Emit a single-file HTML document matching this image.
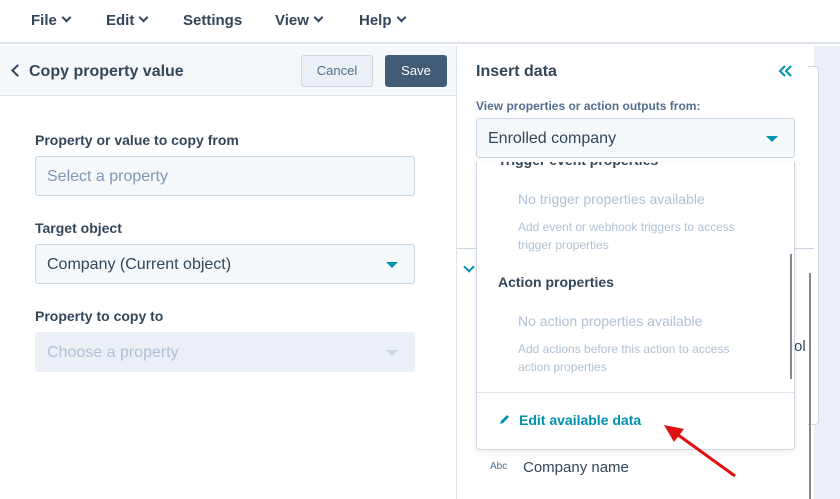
<!DOCTYPE html>
<html><head><style>
*{box-sizing:border-box;margin:0;padding:0}
body{width:840px;height:499px;overflow:hidden;background:#fff;font-family:"Liberation Sans",sans-serif;color:#33475b;position:relative}
.abs{position:absolute}
.menu{left:0;top:0;width:840px;height:44px;background:#fff;border-bottom:2px solid #dfe3eb}
.menu span{position:absolute;top:12px;font-size:15px;font-weight:bold;color:#33475b}
.chev{display:inline-block;width:7px;height:7px;border-right:2px solid #33475b;border-bottom:2px solid #33475b;transform:rotate(45deg);margin-left:6px;position:relative;top:-4px}
.hdr{left:0;top:46px;width:456px;height:50px;background:#f5f8fa;border-bottom:1px solid #dfe3eb}
.lbl{font-size:14px;font-weight:bold;color:#33475b;left:35px}
.inp{left:35px;width:380px;height:40px;border:1px solid #cbd6e2;border-radius:3px;background:#f5f8fa;font-size:16px;padding:11px 11px 0}
.tri{position:absolute;right:16px;top:17px;width:0;height:0;border-left:6px solid transparent;border-right:6px solid transparent;border-top:6px solid #0091ae}
</style></head><body>
<div class="abs menu">
<span style="left:31px">File<i class="chev"></i></span>
<span style="left:106px">Edit<i class="chev"></i></span>
<span style="left:183px">Settings</span>
<span style="left:275px">View<i class="chev"></i></span>
<span style="left:359px">Help<i class="chev"></i></span>
</div>
<div class="abs hdr">
<div class="abs" style="left:13px;top:20px;width:9px;height:9px;border-left:2px solid #33475b;border-bottom:2px solid #33475b;transform:rotate(45deg)"></div>
<div class="abs" style="left:29px;top:17px;font-size:16px;font-weight:bold">Copy property value</div>
<div class="abs" style="left:301px;top:9px;width:72px;height:32px;border:1px solid #cbd6e2;border-radius:3px;background:#eaf0f6;font-size:13px;color:#516f90;text-align:center;line-height:30px">Cancel</div>
<div class="abs" style="left:385px;top:9px;width:62px;height:32px;border-radius:3px;background:#425b76;color:#fff;font-size:13px;text-align:center;line-height:32px">Save</div>
</div>
<div class="abs lbl" style="top:132px">Property or value to copy from</div>
<div class="abs inp" style="top:156px;color:#7c98b6">Select a property</div>
<div class="abs lbl" style="top:220px">Target object</div>
<div class="abs inp" style="top:244px;color:#33475b">Company (Current object)<i class="tri"></i></div>
<div class="abs lbl" style="top:308px">Property to copy to</div>
<div class="abs inp" style="top:332px;background:#eaf0f6;border-color:#eaf0f6;color:#b0c1d4">Choose a property<i class="tri" style="border-top-color:#cbd6e2"></i></div>

<div class="abs" style="left:456px;top:46px;width:1px;height:453px;background:#dfe3eb"></div>
<div class="abs" style="left:814px;top:46px;width:26px;height:453px;background:#eaf0f6"></div>
<div class="abs" style="left:808px;top:66px;width:11px;height:359px;border:1px solid #cbd6e2;border-left:none;border-radius:0 4px 4px 0;background:#fff"></div>
<div class="abs" style="left:457px;top:248px;width:357px;height:1px;background:#cbd6e2"></div>
<div class="abs" style="left:809px;top:273px;width:2px;height:226px;background:#888"></div>
<div class="abs" style="left:465px;top:263px;width:8px;height:8px;border-right:2px solid #0091ae;border-bottom:2px solid #0091ae;transform:rotate(45deg)"></div>
<div class="abs" style="left:794px;top:338px;font-size:15px">ol</div>
<div class="abs" style="left:476px;top:63px;font-size:16px;font-weight:bold">Insert data</div>
<svg class="abs" style="left:778px;top:64px" width="16" height="14"><path d="M7 2 L2 7 L7 12 M13 2 L8 7 L13 12" fill="none" stroke="#0091ae" stroke-width="2"/></svg>
<div class="abs" style="left:476px;top:99px;font-size:12px;font-weight:bold;color:#516f90">View properties or action outputs from:</div>
<div class="abs inp" style="left:476px;top:118px;width:319px;color:#33475b">Enrolled company<i class="tri"></i></div>
<div class="abs" style="left:490px;top:461px;font-size:10px;color:#516f90">Abc</div>
<div class="abs" style="left:523px;top:459px;font-size:15px">Company name</div>

<div class="abs" style="left:476px;top:162px;width:319px;height:288px;background:#fff;border:1px solid #cbd6e2;border-top:none;border-radius:0 0 4px 4px;box-shadow:0 2px 8px rgba(0,0,0,.08);overflow:hidden">
<div class="abs" style="left:21px;top:-10px;font-size:14px;font-weight:bold">Trigger event properties</div>
<div class="abs" style="left:41px;top:29px;font-size:14px;color:#b0c1d4">No trigger properties available</div>
<div class="abs" style="left:41px;top:56px;font-size:12px;color:#b0c1d4;line-height:18px;width:240px">Add event or webhook triggers to access trigger properties</div>
<div class="abs" style="left:21px;top:112px;font-size:14px;font-weight:bold">Action properties</div>
<div class="abs" style="left:41px;top:151px;font-size:14px;color:#b0c1d4">No action properties available</div>
<div class="abs" style="left:41px;top:178px;font-size:12px;color:#b0c1d4;line-height:18px;width:235px">Add actions before this action to access action properties</div>
<div class="abs" style="left:313px;top:92px;width:2px;height:125px;background:#888"></div>
<div class="abs" style="left:0;top:230px;width:319px;height:1px;background:#dfe3eb"></div>
<svg class="abs" style="left:22px;top:251px" width="12" height="12"><path d="M1 11 L2 8 L8 2 L10 4 L4 10 Z" fill="#0091ae"/></svg>
<div class="abs" style="left:42px;top:250px;font-size:14px;font-weight:bold;color:#0091ae">Edit available data</div>
</div>
<svg class="abs" style="left:660px;top:420px" width="80" height="60"><line x1="75" y1="56" x2="14" y2="12" stroke="#e01010" stroke-width="3"/><polygon points="4,5 24,9 14,22" fill="#e01010"/></svg>
</body></html>
